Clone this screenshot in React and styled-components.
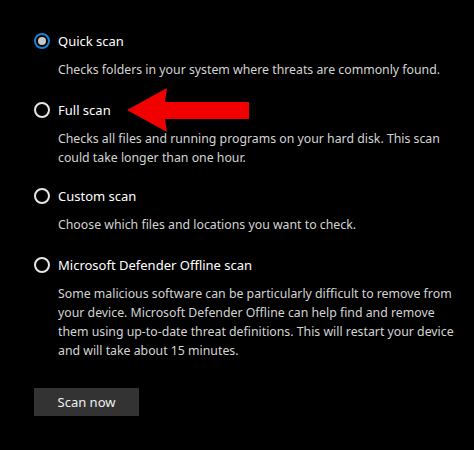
import React, { useState } from "react";
import styled, { createGlobalStyle } from "styled-components";

const GlobalStyle = createGlobalStyle`
  html, body {
    margin: 0;
    padding: 0;
    background: #000;
  }
  body {
    font-family: "Noto Sans", "Open Sans", sans-serif;
  }
`;

const Page = styled.div`
  position: relative;
  width: 474px;
  height: 450px;
  background: #000;
  padding: 32px 0 0 34px;
  box-sizing: border-box;
`;

const OptionList = styled.div`
  display: flex;
  flex-direction: column;
`;

const Option = styled.label`
  display: flex;
  flex-direction: column;
  margin-bottom: ${(p) => p.gap}px;
  cursor: pointer;
`;

const OptionHead = styled.div`
  display: flex;
  align-items: center;
  gap: 8px;
  height: 18px;
`;

const Radio = styled.span`
  width: 16px;
  height: 16px;
  box-sizing: border-box;
  border-radius: 50%;
  border: 2px solid ${(p) => (p.checked ? "#1a7fd4" : "#e6e6e6")};
  display: flex;
  align-items: center;
  justify-content: center;
  flex-shrink: 0;

  &::after {
    content: "";
    width: 8px;
    height: 8px;
    border-radius: 50%;
    background: ${(p) => (p.checked ? "#c8c8c8" : "transparent")};
  }
`;

const Label = styled.span`
  color: #fff;
  font-size: 13px;
  line-height: 18px;
`;

const Description = styled.p`
  margin: 10px 0 0 24px;
  color: #d4d4d4;
  font-size: 12.3px;
  line-height: 19px;
  max-width: 404px;
`;

const ScanButton = styled.button`
  margin-top: 9px;
  width: 105px;
  height: 28px;
  border: none;
  background: #333;
  color: #f0f0f0;
  font-family: inherit;
  font-size: 13px;
  padding: 0;
  cursor: pointer;
`;

const Arrow = styled.svg`
  position: absolute;
  left: 125px;
  top: 86px;
`;

const options = [
  {
    id: "quick",
    label: "Quick scan",
    desc: "Checks folders in your system where threats are commonly found.",
    gap: 22,
  },
  {
    id: "full",
    label: "Full scan",
    desc: "Checks all files and running programs on your hard disk. This scan could take longer than one hour.",
    gap: 20,
  },
  {
    id: "custom",
    label: "Custom scan",
    desc: "Choose which files and locations you want to check.",
    gap: 22,
  },
  {
    id: "offline",
    label: "Microsoft Defender Offline scan",
    desc: "Some malicious software can be particularly difficult to remove from your device. Microsoft Defender Offline can help find and remove them using up-to-date threat definitions. This will restart your device and will take about 15 minutes.",
    gap: 19,
  },
];

export default function App() {
  const [selected, setSelected] = useState("quick");

  return (
    <Page>
      <GlobalStyle />
      <OptionList>
        {options.map((o) => (
          <Option key={o.id} gap={o.gap} onClick={() => setSelected(o.id)}>
            <OptionHead>
              <Radio checked={selected === o.id} />
              <Label>{o.label}</Label>
            </OptionHead>
            <Description>{o.desc}</Description>
          </Option>
        ))}
      </OptionList>
      <ScanButton>Scan now</ScanButton>
      <Arrow width="128" height="48" viewBox="0 0 128 48">
        <polygon points="2,24 42,2 40,16 124,16 124,33 40,33 42,46" fill="#f20000" />
      </Arrow>
    </Page>
  );
}
